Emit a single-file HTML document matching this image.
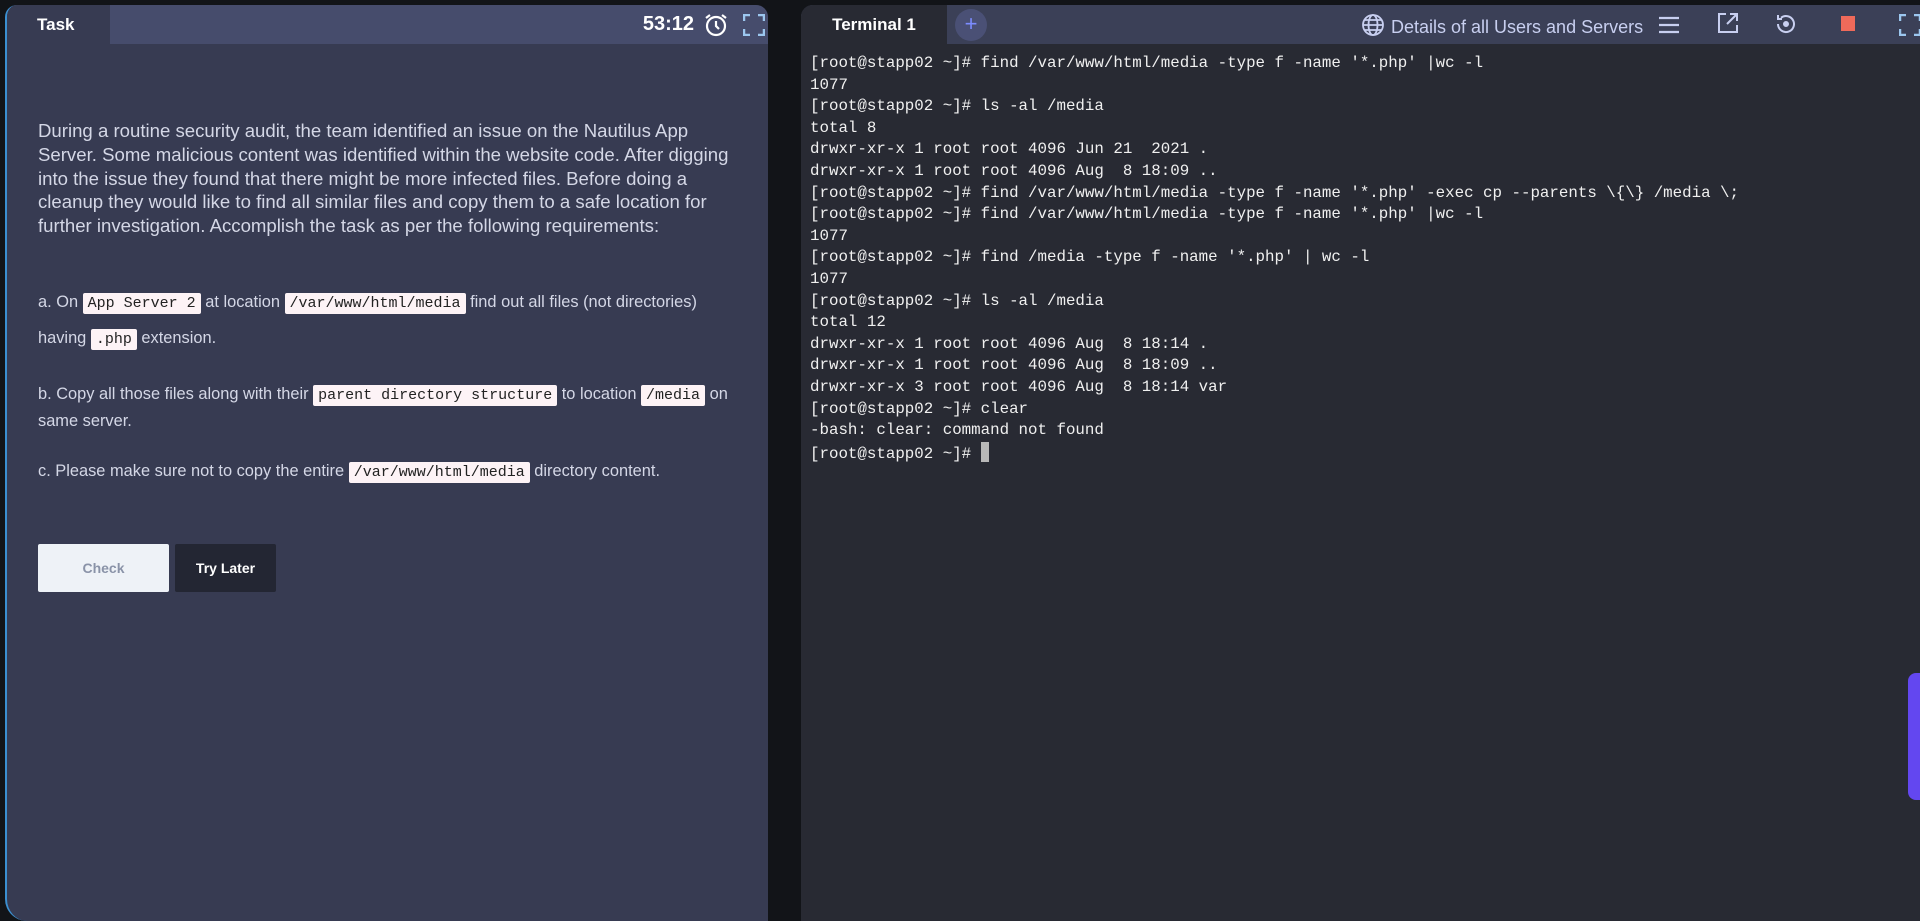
<!DOCTYPE html>
<html><head><meta charset="utf-8"><style>
*{margin:0;padding:0;box-sizing:border-box}
body{width:1920px;height:921px;background:#121418;overflow:hidden;font-family:"Liberation Sans",sans-serif;position:relative}
#left{position:absolute;left:5px;top:5px;width:763px;height:916px;background:#373b52;border-radius:12px 12px 0 22px;overflow:hidden;border-left:2px solid #3b8fd0}
#lh{position:absolute;left:0;top:0;right:0;height:39px;background:#464c6c}
#ltab{position:absolute;left:0;top:0;width:103px;height:39px;background:#373b52;color:#fff;font-weight:bold;font-size:17px;line-height:39px;padding-left:30px}
#timer{position:absolute;right:74px;top:0;line-height:39px;color:#fff;font-size:20px;font-weight:bold}
.para{position:absolute;left:31px;color:#d4d7e6;font-size:18.6px;white-space:nowrap}
.it{font-size:16.4px;line-height:24px}
code{font-family:"Liberation Mono",monospace;background:#fdf3f6;color:#222;font-size:15px;padding:2px 5px;border-radius:2px}
.btn{position:absolute;top:539px;height:48px;font-size:14px;font-weight:bold;text-align:center;line-height:48px;border-radius:2px}
#right{position:absolute;left:801px;top:5px;width:1119px;height:916px;background:#282a33;border-radius:12px 0 0 0;overflow:hidden}
#rh{position:absolute;left:0;top:0;right:0;height:39px;background:#3b4057}
#rtab{position:absolute;left:0;top:0;width:146px;height:39px;background:#282a33;color:#fff;font-weight:bold;font-size:17px;line-height:39px;text-align:center}
#term{position:absolute;left:9px;top:48px;font-family:"Liberation Mono",monospace;font-size:15.8px;line-height:21.6px;color:#f0f0f0;white-space:pre}
</style></head><body>
<div id="left">
 <div id="lh"><div id="ltab">Task</div>
  <div id="timer">53:12</div>
  <svg style="position:absolute;left:696px;top:7px" width="26" height="26" viewBox="0 0 26 26" fill="none" stroke="#fff" stroke-width="2.2"><circle cx="13" cy="14" r="9"/><path d="M13 9v5l3 3M3 6l4-3M23 6l-4-3"/></svg>
  <svg style="position:absolute;left:736px;top:9px" width="22" height="22" viewBox="0 0 22 22" fill="none" stroke="#9cc7ef" stroke-width="2.5"><path d="M1 7V1h6M15 1h6v6M21 15v6h-6M7 21H1v-6"/></svg>
 </div>
 <div class="para" style="top:114px;line-height:23.8px">During a routine security audit, the team identified an issue on the Nautilus App<br>Server. Some malicious content was identified within the website code. After digging<br>into the issue they found that there might be more infected files. Before doing a<br>cleanup they would like to find all similar files and copy them to a safe location for<br>further investigation. Accomplish the task as per the following requirements:</div>
 <div class="para it" style="top:285px">a. On <code>App Server 2</code> at location <code>/var/www/html/media</code> find out all files (not directories)</div>
 <div class="para it" style="top:321px">having <code>.php</code> extension.</div>
 <div class="para it" style="top:377px">b. Copy all those files along with their <code>parent directory structure</code> to location <code>/media</code> on</div>
 <div class="para it" style="top:404px">same server.</div>
 <div class="para it" style="top:454px">c. Please make sure not to copy the entire <code>/var/www/html/media</code> directory content.</div>
 <div class="btn" style="left:31px;width:131px;background:#eef2f7;color:#8a93a8">Check</div>
 <div class="btn" style="left:168px;width:101px;background:#232633;color:#fff">Try Later</div>
</div>
<div id="right">
 <div id="rh"><div id="rtab">Terminal 1</div>
  <div style="position:absolute;left:154px;top:4px;width:32px;height:32px;border-radius:50%;background:#4a5075;color:#7c8cff;font-size:22px;text-align:center;line-height:30px">+</div>
  <svg style="position:absolute;left:560px;top:8px" width="24" height="24" viewBox="0 0 24 24" fill="none" stroke="#c8cff0" stroke-width="1.8"><circle cx="12" cy="12" r="10"/><ellipse cx="12" cy="12" rx="4.5" ry="10"/><path d="M2 12h20M4 7h16M4 17h16"/></svg>
  <div style="position:absolute;left:590px;top:0;line-height:44px;color:#c8cff0;font-size:18px">Details of all Users and Servers</div>
  <svg style="position:absolute;left:857px;top:11px" width="22" height="18" viewBox="0 0 22 18" stroke="#c8cff0" stroke-width="2.2"><path d="M1 2h20M1 9h20M1 16h20"/></svg>
  <svg style="position:absolute;left:916px;top:7px" width="22" height="22" viewBox="0 0 22 22" fill="none" stroke="#c8cff0" stroke-width="2"><path d="M9 2H2v18h18v-7M13 2h7v7M20 2L10 12"/></svg>
  <svg style="position:absolute;left:973px;top:7px" width="24" height="24" viewBox="0 0 24 24" fill="none" stroke="#c8cff0" stroke-width="2"><path d="M4 12a8 8 0 1 0 3-6.2M4 3v4h4"/><circle cx="12" cy="12" r="2" fill="#c8cff0"/></svg>
  <div style="position:absolute;left:1040px;top:11px;width:14px;height:15px;background:#ef6a5a"></div>
  <svg style="position:absolute;left:1098px;top:9px" width="22" height="22" viewBox="0 0 22 22" fill="none" stroke="#9cc7ef" stroke-width="2.5"><path d="M1 7V1h6M15 1h6v6M21 15v6h-6M7 21H1v-6"/></svg>
 </div>
<div id="term">[root@stapp02 ~]# find /var/www/html/media -type f -name '*.php' |wc -l
1077
[root@stapp02 ~]# ls -al /media
total 8
drwxr-xr-x 1 root root 4096 Jun 21  2021 .
drwxr-xr-x 1 root root 4096 Aug  8 18:09 ..
[root@stapp02 ~]# find /var/www/html/media -type f -name '*.php' -exec cp --parents \{\} /media \;
[root@stapp02 ~]# find /var/www/html/media -type f -name '*.php' |wc -l
1077
[root@stapp02 ~]# find /media -type f -name '*.php' | wc -l
1077
[root@stapp02 ~]# ls -al /media
total 12
drwxr-xr-x 1 root root 4096 Aug  8 18:14 .
drwxr-xr-x 1 root root 4096 Aug  8 18:09 ..
drwxr-xr-x 3 root root 4096 Aug  8 18:14 var
[root@stapp02 ~]# clear
-bash: clear: command not found
[root@stapp02 ~]# <span style="display:inline-block;width:8px;height:20px;background:#b8b8b8;vertical-align:-4px"></span></div>
</div>
<div style="position:absolute;left:1908px;top:673px;width:20px;height:127px;background:#6347f0;border-radius:8px"></div>
</body></html>
